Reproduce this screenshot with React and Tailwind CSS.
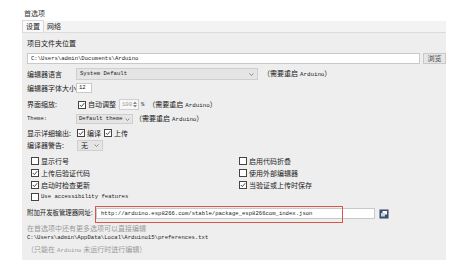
const cn = "font-['Noto_Sans_CJK_SC',sans-serif] text-[7px] leading-none whitespace-nowrap";
const cnSmall = "font-['Noto_Sans_CJK_SC',sans-serif] text-[6.4px] leading-none whitespace-nowrap";
const mono = "font-['Liberation_Mono',monospace] text-[5.6px] leading-none whitespace-nowrap";

function Box({ checked }) {
  return (
    <span className="w-[8px] h-[8px] border border-[#444] bg-white flex items-center justify-center shrink-0">
      {checked && (
        <svg width="6" height="6" viewBox="0 0 6 6">
          <path d="M0.8 3 L2.4 4.6 L5.2 1.2" stroke="#333" strokeWidth="0.9" fill="none" />
        </svg>
      )}
    </span>
  );
}

function Chev() {
  return (
    <svg width="5" height="3" viewBox="0 0 5 3" className="shrink-0">
      <path d="M0.5 0.5 L2.5 2.5 L4.5 0.5" stroke="#666" strokeWidth="0.7" fill="none" />
    </svg>
  );
}

function Restart({ className = "" }) {
  return (
    <span className={"flex items-baseline text-[#222] " + className}>
      <span className={cn}>（需要重启</span>
      <span className={mono + " ml-[2px] text-[5.8px]"}>Arduino</span>
      <span className={cn}>）</span>
    </span>
  );
}

function Check({ checked, children, mono: m }) {
  return (
    <div className="flex items-center gap-[2px] h-[12px]">
      <Box checked={checked} />
      <span className={(m ? mono : cn) + " text-[#222]"}>{children}</span>
    </div>
  );
}

export default function App() {
  return (
    <div className="w-[474px] h-[269px] bg-white overflow-hidden text-[#222]">
      <div className={cn + " pl-[24px] pt-[10px] h-[21px] text-[#333]"}>首选项</div>
      <div className="ml-[22px] w-[424px]">
        <div className="h-[12px] bg-[#f3f3f3] border-b border-[#dcdcdc] flex items-end">
          <div className={cn + " h-[12px] px-[3px] flex items-center bg-[#fafafa] border border-b-0 border-[#d8d8d8]"}>设置</div>
          <div className={cn + " h-[11px] px-[3px] flex items-center"}>网络</div>
        </div>
        <div className="bg-[#eeeeee] h-[227px] pl-[5px] flex flex-col">
          <div className={cn + " mt-[6px] h-[9px] flex items-center"}>项目文件夹位置</div>
          <div className="mt-[5px] h-[11px] flex">
            <div className={mono + " w-[393px] bg-white border border-[#c9c9c9] flex items-center pl-[3px]"}>
              C:\Users\admin\Documents\Arduino
            </div>
            <div className={cn + " ml-[3px] flex-1 bg-[#e6e6e6] border border-[#c9c9c9] flex items-center justify-center text-[#444]"}>浏览</div>
          </div>
          <div className="mt-[4px] h-[12px] flex items-center">
            <span className={cn + " w-[49px]"}>编辑器语言</span>
            <div className="w-[182px] h-[12px] bg-[#e5e5e5] border border-[#cfcfcf] flex items-center justify-between px-[3px]">
              <span className={mono}>System Default</span>
              <Chev />
            </div>
            <Restart className="ml-[5px]" />
          </div>
          <div className="mt-[3px] h-[10px] flex items-center">
            <span className={cn + " w-[49px]"}>编辑器字体大小</span>
            <div className={mono + " w-[16px] h-[10px] bg-white border border-[#c9c9c9] flex items-center pl-[2px]"}>12</div>
          </div>
          <div className="mt-[6px] h-[11px] flex items-center">
            <span className={cn + " w-[51px]"}>界面缩放:</span>
            <Box checked />
            <span className={cn + " ml-[2px]"}>自动调整</span>
            <div className="ml-[3px] w-[20px] h-[11px] bg-[#f7f7f7] border border-[#cfcfcf] flex items-center justify-between pl-[2px] pr-[1px]">
              <span className={mono + " text-[#999]"}>100</span>
              <span className="flex flex-col gap-[1px]">
                <svg width="4" height="3" viewBox="0 0 4 3"><path d="M0 3 L2 0.5 L4 3Z" fill="#888" /></svg>
                <svg width="4" height="3" viewBox="0 0 4 3"><path d="M0 0 L2 2.5 L4 0Z" fill="#888" /></svg>
              </span>
            </div>
            <span className={mono + " ml-[2px]"}>%</span>
            <Restart className="ml-[4px]" />
          </div>
          <div className="mt-[4px] h-[10px] flex items-center">
            <span className={mono + " w-[49px]"}>Theme:</span>
            <div className="w-[57px] h-[10px] bg-[#e5e5e5] border border-[#cfcfcf] flex items-center justify-between pl-[2px] pr-[2px]">
              <span className={mono}>Default theme</span>
              <Chev />
            </div>
            <Restart className="ml-[2px]" />
          </div>
          <div className="mt-[4px] h-[10px] flex items-center">
            <span className={cn + " w-[50px]"}>显示详细输出:</span>
            <Box checked />
            <span className={cn + " ml-[2px]"}>编译</span>
            <span className="ml-[3px]"><Box checked /></span>
            <span className={cn + " ml-[2px]"}>上传</span>
          </div>
          <div className="mt-[2px] h-[11px] flex items-center">
            <span className={cn + " w-[50px]"}>编译器警告:</span>
            <div className="w-[26px] h-[11px] bg-[#e5e5e5] border border-[#cfcfcf] flex items-center justify-between px-[3px]">
              <span className={cn}>无</span>
              <Chev />
            </div>
          </div>
          <div className="mt-[4px] flex">
            <div className="w-[212px] pl-[4px] flex flex-col">
              <Check>显示行号</Check>
              <Check checked>上传后验证代码</Check>
              <Check checked>启动时检查更新</Check>
              <Check mono>Use accessibility features</Check>
            </div>
            <div className="flex flex-col">
              <Check>启用代码折叠</Check>
              <Check>使用外部编辑器</Check>
              <Check checked>当验证或上传时保存</Check>
            </div>
          </div>
          <div className="mt-[2px] h-[17px] flex items-center">
            <span className={cnSmall + " w-[69px]"}>附加开发板管理器网址:</span>
            <div className="relative w-[279px] h-[11px] bg-white border border-[#c9c9c9] flex items-center pl-[4px]">
              <span className={mono}>http://arduino.esp8266.com/stable/package_esp8266com_index.json</span>
              <div className="absolute left-[-2px] top-[-3px] w-[248px] h-[17px] border-[1.5px] border-[#d9574a]" />
            </div>
            <svg width="10" height="10" viewBox="0 0 10 10" className="ml-[4px]">
              <rect x="0" y="0" width="10" height="10" fill="#dfe3ea" />
              <rect x="0.5" y="0.5" width="9" height="9" fill="#3f4f6b" />
              <rect x="3.5" y="2" width="4.5" height="3.5" fill="#ffffff" />
              <rect x="2" y="4" width="4" height="3.5" fill="#c9d3e3" />
            </svg>
          </div>
          <div className={cn + " mt-[2px] h-[8px] flex items-center text-[#9a9a9a]"}>在首选项中还有更多选项可以直接编辑</div>
          <div className={mono + " mt-[2px] h-[8px] flex items-center"}>C:\Users\admin\AppData\Local\Arduino15\preferences.txt</div>
          <div className="mt-[4px] h-[8px] flex items-baseline text-[#9a9a9a]">
            <span className={cn}>（只能在</span>
            <span className={mono + " mx-[2px] text-[5.8px]"}>Arduino</span>
            <span className={cn}>未运行时进行编辑）</span>
          </div>
        </div>
      </div>
    </div>
  );
}
